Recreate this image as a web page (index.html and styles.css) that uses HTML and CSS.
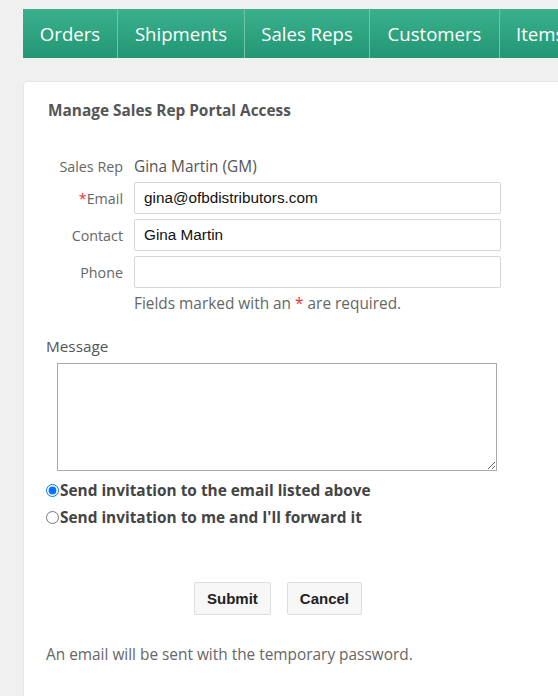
FILE: index.html
```html
<!DOCTYPE html>
<html>
<head>
<meta charset="utf-8">
<link rel="stylesheet" href="styles.css">
</head>
<body>
<nav class="nav">
  <a class="nav-item i-orders">Orders</a>
  <a class="nav-item i-ship">Shipments</a>
  <a class="nav-item i-reps">Sales Reps</a>
  <a class="nav-item i-cust">Customers</a>
  <a class="nav-item i-items">Items</a>
</nav>
<div class="card">
  <h1 class="title">Manage Sales Rep Portal Access</h1>
  <div class="form">
    <div class="row">
      <label class="lbl">Sales Rep</label>
      <span class="value">Gina Martin (GM)</span>
    </div>
    <div class="row">
      <label class="lbl"><span class="req">*</span>Email</label>
      <input class="inp" type="text" value="gina@ofbdistributors.com">
    </div>
    <div class="row">
      <label class="lbl">Contact</label>
      <input class="inp" type="text" value="Gina Martin">
    </div>
    <div class="row">
      <label class="lbl">Phone</label>
      <input class="inp" type="text" value="">
    </div>
    <div class="row">
      <span class="lbl"></span>
      <span class="note">Fields marked with an <span class="req">*</span> are required.</span>
    </div>
  </div>
  <div class="msg-label">Message</div>
  <textarea class="msg"></textarea>
  <label class="radio"><input type="radio" name="send" checked>Send invitation to the email listed above</label>
  <label class="radio"><input type="radio" name="send">Send invitation to me and I'll forward it</label>
  <div class="buttons">
    <button class="btn">Submit</button>
    <button class="btn">Cancel</button>
  </div>
  <p class="foot">An email will be sent with the temporary password.</p>
</div>
</body>
</html>
```
FILE: styles.css
```css
html, body {
  margin: 0;
  padding: 0;
  background: #f0f0f0;
  font-family: "Open Sans", "Liberation Sans", sans-serif;
  overflow: hidden;
}
body {
  padding: 9px 0 0 23px;
}
.nav {
  display: flex;
  height: 49px;
  background: linear-gradient(#3bb08c, #239774);
  width: 600px;
}
.nav-item {
  display: flex;
  align-items: center;
  justify-content: center;
  color: #fff;
  font-size: 18.6px;
  border-right: 1px solid #6cc6a7;
  box-sizing: border-box;
  flex: none;
}
.i-orders { width: 95px; }
.i-ship { width: 127px; }
.i-reps { width: 125px; }
.i-cust { width: 130px; }
.i-items { width: 120px; border-right: none; justify-content: flex-start; padding-left: 16px; }
.card {
  margin-top: 23px;
  background: #fff;
  border-radius: 4px 0 0 0;
  width: 600px;
  height: 640px;
  padding: 18px 0 0 23px;
  box-sizing: border-box;
  border-top: 1px solid #e6e6e6;
  border-left: 1px solid #e6e6e6;
}
.title {
  margin: 0 0 0 1px;
  font-size: 15.4px;
  font-weight: bold;
  color: #555;
  line-height: 22px;
}
.form {
  margin-top: 33px;
  display: flex;
  flex-direction: column;
  gap: 5px;
}
.row {
  display: flex;
  align-items: center;
  gap: 11px;
  min-height: 22px;
}
.lbl {
  width: 76px;
  text-align: right;
  font-size: 14.3px;
  color: #666;
}
.value {
  font-size: 15.4px;
  color: #555;
}
.req { color: #e33; }
.inp {
  width: 367px;
  height: 32px;
  box-sizing: border-box;
  border: 1px solid #d6d6d6;
  border-radius: 2px;
  padding: 0 9px;
  font-family: "Liberation Sans", Arial, sans-serif;
  font-size: 15.3px;
  color: #111;
  margin: 0;
}
.note {
  font-size: 15.4px;
  color: #666;
  margin-top: -1px;
}
.msg-label {
  margin-top: 21px;
  font-size: 15.3px;
  color: #555;
  margin-left: -1px;
}
.msg {
  display: block;
  margin: 7px 0 0 10px;
  width: 440px;
  height: 108px;
  box-sizing: border-box;
  border: 1px solid #aaa;
  resize: vertical;
}
.radio {
  display: flex;
  align-items: center;
  font-size: 15.4px;
  font-weight: bold;
  color: #444;
  height: 22px;
  margin-top: 8px;
  margin-left: -1px;
}
.radio + .radio { margin-top: 5px; }
.radio input {
  margin: 0 1px 0 0;
  width: 13px;
  height: 13px;
}
.buttons {
  display: flex;
  gap: 16px;
  margin: 54px 0 0 147px;
}
.btn {
  font-family: "Liberation Sans", Arial, sans-serif;
  font-weight: bold;
  font-size: 15px;
  color: #222;
  background: #f7f7f7;
  border: 1px solid #ddd;
  border-radius: 2px;
  height: 33px;
  padding: 0 12px;
}
.foot {
  margin: 29px 0 0 -1px;
  font-size: 15.4px;
  color: #666;
}
```
